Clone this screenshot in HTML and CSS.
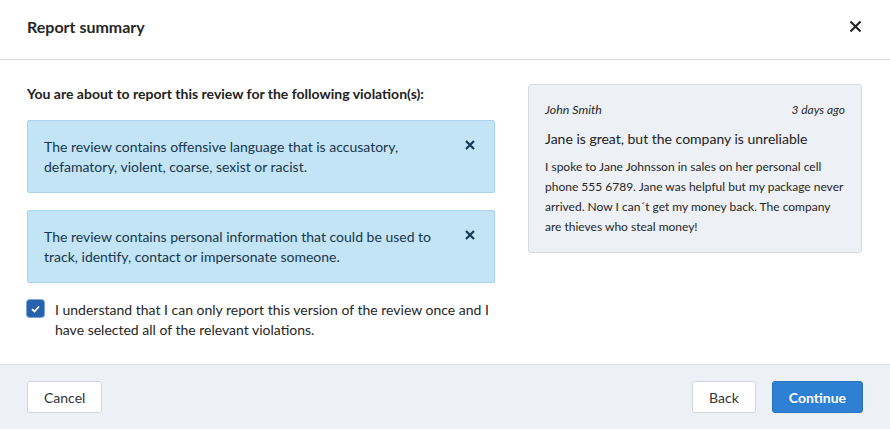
FILE: index.html
```html
<!DOCTYPE html>
<html>
<head>
<meta charset="utf-8">
<link rel="stylesheet" href="styles.css">
</head>
<body>
<div class="modal">
  <header class="modal-header">
    <h1 class="modal-title">Report summary</h1>
    <button class="close-btn" aria-label="Close">
      <svg width="11" height="11" viewBox="0 0 11 11"><path d="M1.2 1.2 L9.8 9.8 M9.8 1.2 L1.2 9.8" stroke="#222" stroke-width="2.1" stroke-linecap="square"/></svg>
    </button>
  </header>
  <main class="modal-body">
    <section class="left-col">
      <p class="intro">You are about to report this review for the following violation(s):</p>
      <div class="violation">
        <p>The review contains offensive language that is accusatory, defamatory, violent, coarse, sexist or racist.</p>
        <button class="remove-btn" aria-label="Remove">
          <svg width="10" height="10" viewBox="0 0 10 10"><path d="M1 1 L9 9 M9 1 L1 9" stroke="#123a57" stroke-width="2.2"/></svg>
        </button>
      </div>
      <div class="violation">
        <p>The review contains personal information that could be used to track, identify, contact or impersonate someone.</p>
        <button class="remove-btn" aria-label="Remove">
          <svg width="10" height="10" viewBox="0 0 10 10"><path d="M1 1 L9 9 M9 1 L1 9" stroke="#123a57" stroke-width="2.2"/></svg>
        </button>
      </div>
      <label class="confirm">
        <span class="checkbox">
          <svg width="9" height="8" viewBox="0 0 9 8"><path d="M1 4.2 L3.5 6.5 L8 1.5" fill="none" stroke="#fff" stroke-width="1.8"/></svg>
        </span>
        <span class="confirm-text">I understand that I can only report this version of the review once and I have selected all of the relevant violations.</span>
      </label>
    </section>
    <aside class="review-card">
      <div class="review-meta">
        <span class="author">John Smith</span>
        <span class="date">3 days ago</span>
      </div>
      <h2 class="review-title">Jane is great, but the company is unreliable</h2>
      <p class="review-text">I spoke to Jane Johnsson in sales on her personal cell phone 555 6789. Jane was helpful but my package never arrived. Now I can´t get my money back. The company are thieves who steal money!</p>
    </aside>
  </main>
  <footer class="modal-footer">
    <button class="btn">Cancel</button>
    <div class="footer-right">
      <button class="btn">Back</button>
      <button class="btn btn-primary">Continue</button>
    </div>
  </footer>
</div>
</body>
</html>
```

FILE: styles.css
```css
* { box-sizing: border-box; }
html, body { margin: 0; padding: 0; }
body {
  font-family: Lato, "Open Sans", sans-serif;
  color: #262a2e;
  background: #fff;
  width: 890px;
  height: 429px;
  overflow: hidden;
}
.modal { display: flex; flex-direction: column; height: 429px; }
.modal-header {
  height: 60px;
  border-bottom: 1px solid #dcdcdc;
  display: flex;
  align-items: center;
  justify-content: space-between;
  padding: 0 29px 0 27px;
}
.modal-title {
  margin: 0;
  font-size: 16px;
  font-weight: 700;
  color: #262626;
  padding-bottom: 6px;
}
.close-btn {
  border: 0; background: none; padding: 0;
  display: flex; margin-bottom: 6px;
}
.modal-body {
  flex: 1;
  display: flex;
  gap: 33px;
  padding: 24px 28px 0 27px;
}
.left-col { width: 468px; display: flex; flex-direction: column; }
.intro {
  margin: 0 0 16px;
  font-size: 14px;
  font-weight: 700;
  line-height: 20px;
  color: #222;
}
.violation {
  display: flex;
  justify-content: space-between;
  align-items: flex-start;
  background: #c3e4f5;
  border: 1px solid #a8d4ee;
  border-radius: 2px;
  padding: 16px 19px 15px 16px;
  margin-bottom: 17px;
}
.violation p {
  margin: 0;
  font-size: 14px;
  line-height: 20px;
  color: #16364d;
  width: 390px;
}
.remove-btn {
  border: 0; background: none; padding: 0;
  display: flex; margin-top: 3px;
}
.confirm { display: flex; gap: 11px; align-items: flex-start; }
.checkbox {
  flex: none;
  width: 17px; height: 17px;
  border-radius: 3px;
  background: #2762ad;
  box-shadow: 0 0 0 1px #7aa6dc;
  display: flex; align-items: center; justify-content: center;
}
.confirm-text {
  font-size: 14px;
  line-height: 20px;
  color: #262626;
}
.review-card {
  width: 334px;
  align-self: flex-start;
  background: #edf0f5;
  border: 1px solid #d7dce3;
  border-radius: 3px;
  padding: 16px 16px 15px 16px;
}
.review-meta {
  display: flex;
  justify-content: space-between;
  font-size: 12px;
  font-style: italic;
  line-height: 18px;
  color: #2a2a2a;
}
.author { font-size: 12.4px; }
.review-title {
  margin: 9px 0 7px;
  font-size: 14px;
  font-weight: 400;
  line-height: 22px;
  color: #222;
}
.review-text {
  margin: 0;
  font-size: 12px;
  line-height: 20px;
  color: #262626;
}
.modal-footer {
  height: 65px;
  background: #edf0f5;
  border-top: 1px solid #dde0e5;
  display: flex;
  justify-content: space-between;
  align-items: flex-start;
  padding: 16px 27px 0 27px;
}
.footer-right { display: flex; gap: 16px; }
.btn {
  font-family: Lato, "Open Sans", sans-serif;
  font-size: 14px;
  height: 32px;
  padding: 0 16px;
  background: #fff;
  border: 1px solid #d2d6dc;
  border-radius: 3px;
  color: #333;
}
.btn-primary {
  background: #2d80d4;
  border-color: #2a72bd;
  color: #fff;
  font-weight: 700;
}
```
